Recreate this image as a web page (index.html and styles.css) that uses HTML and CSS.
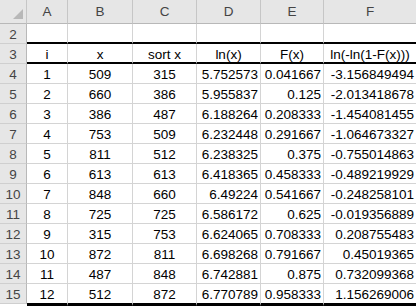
FILE: index.html
```html
<!DOCTYPE html>
<html lang="en">
<head>
  <meta charset="UTF-8" />
  <title>Weibull plot</title>
  <link rel="stylesheet" href="styles.css">
</head>
<body>
  <div class="sheet">
    <div class="row head">
      <div class="rh corner">
        <svg width="12" height="12" viewBox="0 0 12 12"><polygon points="11,1 11,11 1,11" fill="#b8b8b8"/></svg>
      </div>
      <div class="ch">A</div><div class="ch">B</div><div class="ch">C</div>
      <div class="ch">D</div><div class="ch">E</div><div class="ch">F</div>
    </div>

    <div class="row thick">
      <div class="rh">2</div>
      <div class="c"></div><div class="c"></div><div class="c"></div>
      <div class="c"></div><div class="c"></div><div class="c"></div>
    </div>

    <div class="row thick">
      <div class="rh">3</div>
      <div class="c mid">i</div><div class="c mid">x</div><div class="c mid">sort x</div>
      <div class="c mid">ln(x)</div><div class="c mid">F(x)</div><div class="c mid">ln(-ln(1-F(x)))</div>
    </div>

    <div id="rows"></div>
  </div>

  <script>
    const data = [
      [1, 509, 315, '5.752573', '0.041667', '-3.156849494'],
      [2, 660, 386, '5.955837', '0.125', '-2.013418678'],
      [3, 386, 487, '6.188264', '0.208333', '-1.454081455'],
      [4, 753, 509, '6.232448', '0.291667', '-1.064673327'],
      [5, 811, 512, '6.238325', '0.375', '-0.755014863'],
      [6, 613, 613, '6.418365', '0.458333', '-0.489219929'],
      [7, 848, 660, '6.49224', '0.541667', '-0.248258101'],
      [8, 725, 725, '6.586172', '0.625', '-0.019356889'],
      [9, 315, 753, '6.624065', '0.708333', '0.208755483'],
      [10, 872, 811, '6.698268', '0.791667', '0.45019365'],
      [11, 487, 848, '6.742881', '0.875', '0.732099368'],
      [12, 512, 872, '6.770789', '0.958333', '1.156269006']
    ];

    const rows = document.getElementById('rows');
    data.forEach((d, i) => {
      const row = document.createElement('div');
      row.className = 'row' + (i === data.length - 1 ? ' last' : '');
      let html = `<div class="rh">${i + 4}</div>`;
      d.forEach((v, j) => {
        html += `<div class="c ${j < 3 ? 'mid' : 'num'}">${v}</div>`;
      });
      row.innerHTML = html;
      rows.appendChild(row);
    });
  </script>
</body>
</html>
```

FILE: styles.css
```css
*, *::before, *::after {
  box-sizing: border-box;
  margin: 0;
  padding: 0;
}
html, body {
  background: #fff;
  font-family: 'Liberation Sans', Arial, sans-serif;
  font-size: 13.5px;
  color: #000;
  overflow: hidden;
}

.sheet {
  width: 416px;
}

/* ---- rows ---- */
.row {
  display: grid;
  grid-template-columns: 27px 41px 65px 64px 64px 63px 92px;
  height: 20px;
}
.row > div {
  border-right: 1px solid #d4d4d4;
  border-bottom: 1px solid #d4d4d4;
  line-height: 19px;
  white-space: nowrap;
  overflow: hidden;
}
.row > div:last-child {
  border-right: none;
}

/* ---- header ---- */
.row.head {
  height: 24px;
}
.row.head > div {
  background: #e6e6e6;
  color: #444;
  border-right-color: #c6c6c6;
  border-bottom-color: #b8b8b8;
  line-height: 23px;
  text-align: center;
}
.corner {
  display: flex;
  align-items: flex-end;
  justify-content: flex-end;
  padding: 0 2px 3px 0;
}
.corner svg {
  display: block;
}

.rh {
  background: #e6e6e6;
  color: #444;
  text-align: center;
  padding-top: 1px;
}
.row > .rh {
  border-right-color: #b8b8b8;
  border-bottom-color: #cfcfcf;
}

/* ---- cells ---- */
.c {
  padding: 1px 2px 0;
}
.mid {
  text-align: center;
}
.num {
  text-align: right;
}

/* ---- borders ---- */
.row.thick > .c {
  border-bottom: 2px solid #000;
}
.row.last {
  height: 23px;
}
.row.last > div {
  height: 20px;
}
.row.last > .c {
  border-bottom: 3px solid #000;
  height: 22px;
}
```
